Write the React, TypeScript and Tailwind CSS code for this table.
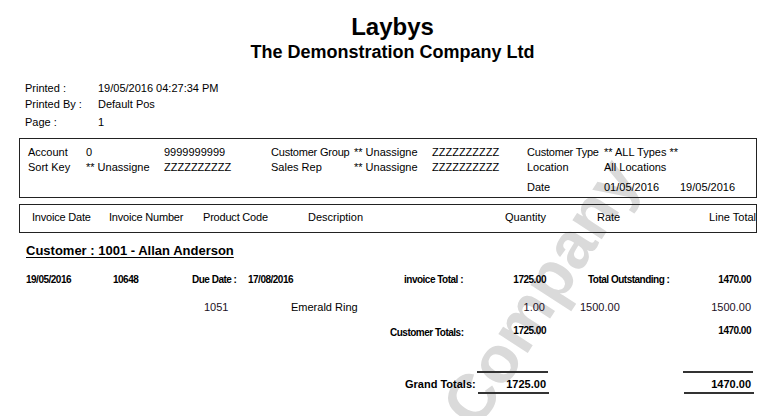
import React from 'react';

// Layby report preview: header, filter box, column header, one customer block and grand totals.

const narrow = 'font-bold text-[10px] tracking-[-0.5px] leading-[14px]';

function HeaderBox() {
  return (
    <div className="ml-[19px] mt-[7px] h-[60px] w-[738px] border border-[#222] pt-[6px] pl-[8px] leading-[15px]">
      <div className="grid h-[15px] grid-cols-[58px_78px_107px_83px_78px_95px_77px_76px_1fr] whitespace-nowrap">
        <span>Account</span>
        <span>0</span>
        <span>9999999999</span>
        <span className="tracking-[-0.2px]">Customer Group</span>
        <span>** Unassigne</span>
        <span>ZZZZZZZZZZ</span>
        <span className="tracking-[-0.2px]">Customer Type</span>
        <span>** ALL Types **</span>
        <span />
      </div>
      <div className="grid h-[20px] grid-cols-[58px_78px_107px_83px_78px_95px_77px_76px_1fr] whitespace-nowrap">
        <span>Sort Key</span>
        <span>** Unassigne</span>
        <span>ZZZZZZZZZZ</span>
        <span>Sales Rep</span>
        <span>** Unassigne</span>
        <span>ZZZZZZZZZZ</span>
        <span>Location</span>
        <span>All Locations</span>
        <span />
      </div>
      <div className="grid h-[15px] grid-cols-[58px_78px_107px_83px_78px_95px_77px_76px_1fr] whitespace-nowrap">
        <span />
        <span />
        <span />
        <span />
        <span />
        <span />
        <span>Date</span>
        <span>01/05/2016</span>
        <span>19/05/2016</span>
      </div>
    </div>
  );
}

function ColumnHeader() {
  return (
    <div className="ml-[19px] mt-[6px] flex h-[29px] w-[738px] border border-[#222] pt-[5px] pl-[12px] leading-[15px] whitespace-nowrap">
      <span className="w-[77px] tracking-[-0.2px]">Invoice Date</span>
      <span className="w-[94px] tracking-[-0.2px]">Invoice Number</span>
      <span className="w-[105px] tracking-[-0.2px]">Product Code</span>
      <span className="w-[197px]">Description</span>
      <span className="w-[92px]">Quantity</span>
      <span>Rate</span>
      <span className="flex-1 text-right">Line Total</span>
    </div>
  );
}

function Watermark() {
  return (
    <div className="pointer-events-none absolute left-[540px] top-[292px] -z-10 -translate-x-1/2 -translate-y-1/2 -rotate-57 whitespace-nowrap text-[66px] font-bold leading-none text-[#dadada]">
      Company
    </div>
  );
}

export default function App() {
  return (
    <div className="relative isolate h-[416px] w-[770px] overflow-hidden bg-white font-['Liberation_Sans',Arial,sans-serif] text-[11px] text-black">
      <Watermark />

      {/* Title */}
      <div className="pl-[15px] pt-[13px] text-center font-bold">
        <div className="text-[24px] leading-[28px]">Laybys</div>
        <div className="text-[18px] leading-[22px]">The Demonstration Company Ltd</div>
      </div>

      {/* Print info */}
      <div className="mt-[17px] pl-[25px] leading-[17px]">
        <div className="flex h-[16px]">
          <span className="w-[73px]">Printed :</span>
          <span>19/05/2016 04:27:34 PM</span>
        </div>
        <div className="flex h-[18px]">
          <span className="w-[73px]">Printed By :</span>
          <span>Default Pos</span>
        </div>
        <div className="flex h-[17px]">
          <span className="w-[73px]">Page :</span>
          <span>1</span>
        </div>
      </div>

      <HeaderBox />
      <ColumnHeader />

      {/* Customer block */}
      <div className="mt-[10px] pl-[26px] text-[13px] font-bold leading-[16px] underline underline-offset-[2px]">
        Customer : 1001 - Allan Anderson
      </div>

      <div className={`mt-[14px] flex h-[14px] pl-[26px] whitespace-nowrap ${narrow}`}>
        <span className="w-[87px]">19/05/2016</span>
        <span className="w-[79px]">10648</span>
        <span className="w-[56px]">Due Date :</span>
        <span className="w-[156px]">17/08/2016</span>
        <span className="flex w-[142px] justify-between">
          <span>invoice Total :</span>
          <span>1725.00</span>
        </span>
        <span className="w-[42px]" />
        <span className="flex w-[163px] justify-between">
          <span>Total Outstanding :</span>
          <span>1470.00</span>
        </span>
      </div>

      <div className="mt-[13px] flex h-[15px] pl-[204px] leading-[15px] whitespace-nowrap text-[#1c1024]">
        <span className="w-[87px]">1051</span>
        <span className="w-[120px] text-black">Emerald Ring</span>
        <span className="w-[134px] text-right">1.00</span>
        <span className="w-[35px]" />
        <span className="flex w-[171px] justify-between">
          <span>1500.00</span>
          <span>1500.00</span>
        </span>
      </div>

      <div className={`mt-[9px] flex h-[14px] pl-[390px] whitespace-nowrap ${narrow}`}>
        <span className="w-[75px] pt-[2px]">Customer Totals:</span>
        <span className="w-[81px] text-right">1725.00</span>
        <span className="w-[205px] text-right">1470.00</span>
      </div>

      {/* Grand totals */}
      <div className="mt-[33px] flex pl-[405px] text-[11px] font-bold leading-[15px] whitespace-nowrap">
        <span className="w-[72px] pt-[6px]">Grand Totals:</span>
        <div className="w-[72px]">
          <div className="h-[2px] w-[71px] bg-[#333]" />
          <div className="mt-[4px] pr-[3px] text-right">1725.00</div>
          <div className="ml-[1px] h-[2px] w-[71px] bg-[#333]" />
        </div>
        <div className="ml-[134px] w-[71px]">
          <div className="h-[2px] w-[70px] bg-[#333]" />
          <div className="mt-[4px] pr-[3px] text-right">1470.00</div>
          <div className="ml-[1px] h-[2px] w-[70px] bg-[#333]" />
        </div>
      </div>
    </div>
  );
}
